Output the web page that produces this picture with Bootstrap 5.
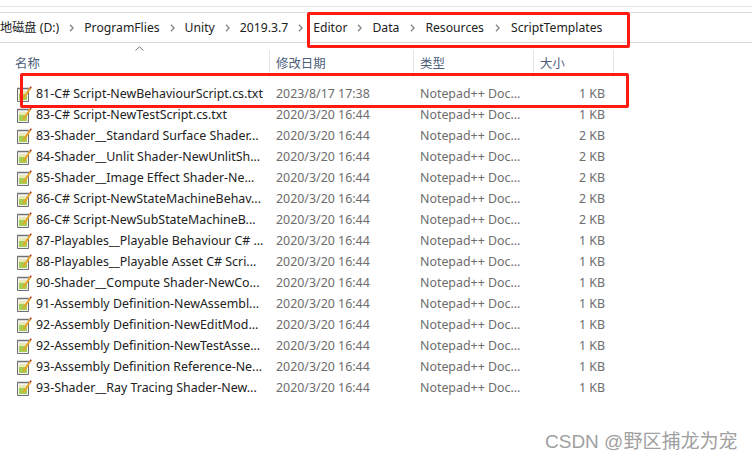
<!DOCTYPE html>
<html lang="zh">
<head>
<meta charset="UTF-8">
<title>ScriptTemplates</title>
<link href="https://cdn.jsdelivr.net/npm/bootstrap@5.3.0/dist/css/bootstrap.min.css" rel="stylesheet">
<style>
html, body { margin: 0; background: #fff; }
body { width: 752px; height: 460px; overflow: hidden; position: relative; font-family: "Noto Sans", "Noto Sans CJK SC", sans-serif; font-size: 12.4px; line-height: 21px; color: #6d6d6d; }
.top-line { height: 1px; margin-top: 6px; background: #e3e3e3; }
.crumbs { margin-top: 5px; height: 31px; border-top: 1px solid #dcdcdc; border-bottom: 1px solid #d9d9d9; color: #222; font-size: 12.2px; white-space: nowrap; align-items: center; }
.crumbs .sep { width: 25px; }
.crumbs .sep.wide { width: 26px; }
.crumbs .sep.wider { width: 27px; }
.crumbs .sep svg { display: block; margin: 0 auto; }
.head { height: 27px; margin-top: 7px; color: #4c607a; align-items: stretch; }
.head > div { border-right: 1px solid #e5e5e5; padding-top: 3px; position: relative; }
.col-name { width: 270px; padding-left: 15px; flex: none; }
.col-date { width: 144px; padding-left: 6px; flex: none; }
.col-type { width: 120px; padding-left: 6px; flex: none; white-space: nowrap; }
.col-size { width: 80px; padding-left: 6px; flex: none; }
.sort { position: absolute; left: 135px; top: -4px; }
.rows { margin-top: 6px; }
.file { height: 21px; align-items: center; white-space: nowrap; }
.file .col-name { padding-left: 16px; color: #222; display: flex; align-items: center; gap: 4px; }
.file .col-size { text-align: right; padding: 0 9px 0 0; }
.red-box { position: absolute; border: 3px solid #ff1a12; border-radius: 2px; }
.red-path { left: 307px; top: 12px; width: 323px; height: 36px; }
.red-row { left: 20px; top: 73px; width: 609px; height: 35px; }
.wm { position: absolute; left: 545px; top: 431px; color: #a0a0a0; font-size: 19px; font-family: "Liberation Sans", "Noto Sans CJK SC", sans-serif; white-space: nowrap; }
</style>
</head>
<body>
<div class="top-line"></div>
<div class="crumbs d-flex">
    <span>地磁盘 (D:)</span><span class="sep"></span>
    <span>ProgramFlies</span><span class="sep"></span>
    <span>Unity</span><span class="sep"></span>
    <span>2019.3.7</span><span class="sep"></span>
    <span>Editor</span><span class="sep"></span>
    <span>Data</span><span class="sep wide"></span>
    <span>Resources</span><span class="sep wider"></span>
    <span>ScriptTemplates</span>
</div>
<div class="head d-flex">
    <div class="col-name">名称
        <svg class="sort" width="9" height="5" viewBox="0 0 9 5"><path d="M.5 4.500 4.500.8l4 3.700" fill="none" stroke="#777"/></svg>
    </div>
    <div class="col-date">修改日期</div>
    <div class="col-type">类型</div>
    <div class="col-size">大小</div>
</div>
<div class="rows" id="rows"></div>
<div class="red-box red-path"></div>
<div class="red-box red-row"></div>
<div class="wm">CSDN @野区捕龙为宠</div>
<script>
    const sep = '<svg width="5" height="8" viewBox="0 0 5 8"><path d="M1 .8 4 4 1 7.200" fill="none" stroke="#8a8a8a" stroke-width="1.4"/></svg>';
    document.querySelectorAll('.sep').forEach(s => s.innerHTML = sep);

    const icon = '<svg width="16" height="18" viewBox="0 0 16 18" class="flex-shrink-0">'
        + '<path d="M1.500 3.500h11v13h-11z" fill="#f4f4f4" stroke="#6f6f6f"/>'
        + '<path d="M2 2.500v2M4 2.500v2M6 2.500v2M8 2.500v2M10 2.500v2M12 2.500v2" stroke="#777"/>'
        + '<path d="M3 9h8v6H3z" fill="#a5cf52"/><path d="M3 6h8v3H3z" fill="#e9e9b8"/>'
        + '<path d="M7 12 14 2l1.500 1L9 13l-2.500 1z" fill="#e8a52a"/><path d="M13.500 2.800 14.500 1.200l1.300.9-1 1.600z" fill="#b3382a"/>'
        + '</svg>';

    const files = [
        ['81-C# Script-NewBehaviourScript.cs.txt', '2023/8/17 17:38', '1 KB'],
        ['83-C# Script-NewTestScript.cs.txt', '2020/3/20 16:44', '1 KB'],
        ['83-Shader__Standard Surface Shader...', '2020/3/20 16:44', '2 KB'],
        ['84-Shader__Unlit Shader-NewUnlitSh...', '2020/3/20 16:44', '2 KB'],
        ['85-Shader__Image Effect Shader-Ne...', '2020/3/20 16:44', '2 KB'],
        ['86-C# Script-NewStateMachineBehav...', '2020/3/20 16:44', '2 KB'],
        ['86-C# Script-NewSubStateMachineB...', '2020/3/20 16:44', '2 KB'],
        ['87-Playables__Playable Behaviour C# ...', '2020/3/20 16:44', '1 KB'],
        ['88-Playables__Playable Asset C# Scri...', '2020/3/20 16:44', '1 KB'],
        ['90-Shader__Compute Shader-NewCo...', '2020/3/20 16:44', '1 KB'],
        ['91-Assembly Definition-NewAssembl...', '2020/3/20 16:44', '1 KB'],
        ['92-Assembly Definition-NewEditMod...', '2020/3/20 16:44', '1 KB'],
        ['92-Assembly Definition-NewTestAsse...', '2020/3/20 16:44', '1 KB'],
        ['93-Assembly Definition Reference-Ne...', '2020/3/20 16:44', '1 KB'],
        ['93-Shader__Ray Tracing Shader-New...', '2020/3/20 16:44', '1 KB']
    ];
    document.getElementById('rows').innerHTML = files.map(f =>
        `<div class="file d-flex"><div class="col-name">${icon}<span>${f[0]}</span></div>`
        + `<div class="col-date">${f[1]}</div><div class="col-type">Notepad++ Doc...</div>`
        + `<div class="col-size">${f[2]}</div></div>`).join('');
</script>
<script src="https://cdn.jsdelivr.net/npm/bootstrap@5.3.0/dist/js/bootstrap.bundle.min.js"></script>
</body>
</html>
